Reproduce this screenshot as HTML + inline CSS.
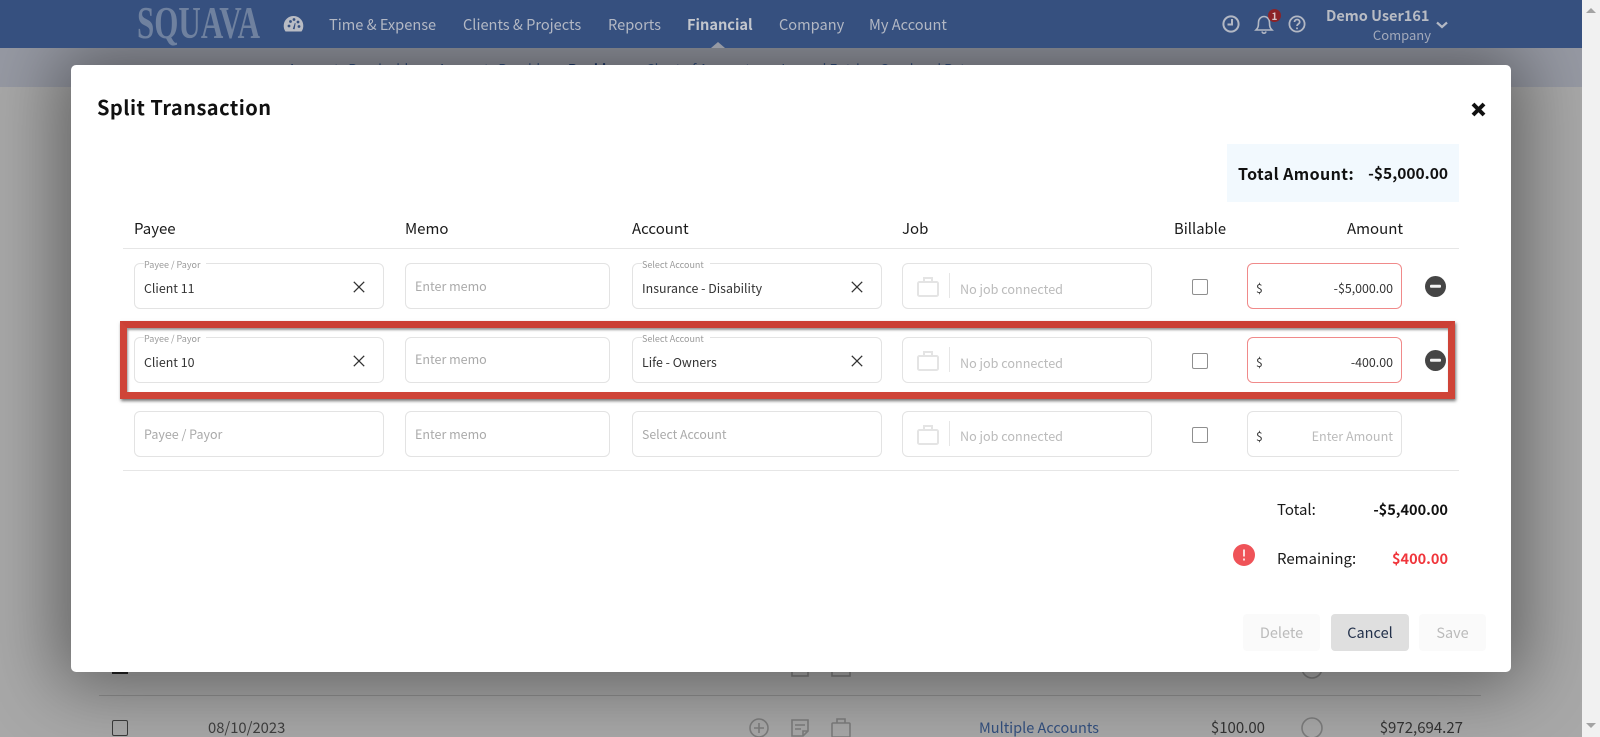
<!DOCTYPE html>
<html lang="en">
<head>
<meta charset="utf-8">
<title>Split Transaction</title>
<style>
html,body{margin:0;padding:0;width:1600px;height:737px;overflow:hidden;background:#a8a8a8}
*{box-sizing:border-box}
body{position:relative;font-family:"Noto Sans CJK JP","Liberation Sans",sans-serif;color:#111}
.a{position:absolute}
.t{position:absolute;white-space:nowrap;height:20px;line-height:20px}
.r{text-align:right}
#sub{left:0;top:48px;width:1582px;height:39px;background:#9699a3}
#hdr{left:0;top:0;width:1582px;height:48px;background:#36507f;z-index:5;color:#b3b8c4;font-size:14.600px}
#sb{left:1582px;top:0;width:18px;height:737px;background:#f1f1f1;z-index:6}
#modal{left:71px;top:65px;width:1440px;height:607px;background:#fff;border-radius:5px;box-shadow:0 0 70px 14px rgba(0,0,0,.42);z-index:3}
#page{left:0;top:0;width:1600px;height:737px;z-index:4;pointer-events:none}
.f{position:absolute;border:1px solid #e3e3e3;border-radius:6px;background:#fff;height:46px}
.lab{position:absolute;font-size:9px;color:#9a9a9a;background:#fff;padding:0 6px 0 0;height:10px;line-height:10px;white-space:nowrap}
.v{font-size:12.400px;color:#333}
.p{font-size:12.500px;color:#aaa}
.n{font-size:12.600px;color:#bbb}
.h{font-size:15px;color:#1a1a1a}
.b{font-size:14.500px;color:#111;font-weight:700}
.btn{position:absolute;top:614px;height:37px;border-radius:4px;background:#fafafa;color:#bbb;font-size:14.500px;text-align:center;line-height:37px}
.cb{position:absolute;width:16px;height:16px;border:1.5px solid #8f8f8f;border-radius:2px;background:#fff}
.sep{position:absolute;width:1px;height:25px;background:#e6e6e6}
.line{position:absolute;height:1px;background:#e6e6e6;left:123px;width:1336px}
svg{position:absolute;overflow:visible}
</style>
</head>
<body>

<div class="a" id="sub"></div>
<div class="t" style="left:288px;top:58px;font-size:13.500px;color:#33507f;z-index:1">Accounts Receivable</div>
<div class="t" style="left:438px;top:58px;font-size:13.500px;color:#33507f;z-index:1">Accounts Payable</div>
<div class="t" style="left:568px;top:58px;font-size:13.500px;color:#1f3a6b;font-weight:700;z-index:1">Banking</div>
<div class="t" style="left:646px;top:58px;font-size:13.500px;color:#33507f;z-index:1">Chart of Accounts</div>
<div class="t" style="left:778px;top:58px;font-size:13.500px;color:#33507f;z-index:1">Journal Entries</div>
<div class="t" style="left:880px;top:58px;font-size:13.500px;color:#33507f;z-index:1">Overhead Rates</div>

<!-- page rows behind the dialog -->
<div class="a" style="left:99px;top:695px;width:1382px;height:1px;background:#8f8f8f;z-index:1"></div>
<div class="a" style="left:112px;top:662px;width:16px;height:12px;border:2px solid #222;z-index:1"></div>
<div class="a" style="left:112px;top:720px;width:16px;height:16px;border:1.5px solid #3b3b3b;border-radius:2px;z-index:1"></div>
<div class="t" style="left:208px;top:718px;font-size:14.800px;color:#3f3f3f;z-index:1">08/10/2023</div>
<div class="t" style="left:979px;top:718px;font-size:14.500px;color:#33507f;z-index:1">Multiple Accounts</div>
<div class="t r" style="left:1165px;width:100px;top:718px;font-size:15px;color:#333;z-index:1">$100.00</div>
<div class="t r" style="left:1343px;width:120px;top:718px;font-size:15px;color:#333;z-index:1">$972,694.27</div>
<svg style="left:0;top:0;z-index:1" width="1600" height="737" fill="none" stroke="#7d7d7d" stroke-width="1.6">
  <circle cx="759" cy="728" r="9"/><path d="M759 723v10M754 728h10"/>
  <path d="M792 720h16v11l-5 5h-11zM795 725h10M795 729h6M808 731h-5v5"/>
  <rect x="832" y="723" width="18" height="14" rx="1"/><path d="M837 723v-4h8v4"/>
  <circle cx="1312" cy="728" r="10"/><circle cx="1312" cy="668" r="10"/>
  <rect x="792" y="660" width="16" height="16"/><rect x="832" y="662" width="18" height="14"/>
</svg>

<!-- header -->
<div class="a" id="hdr">
  <div class="t" style="left:137px;top:7px;height:32px;line-height:32px;font-family:'Liberation Serif',serif;font-size:46px;font-weight:700;color:#6f819f;transform-origin:0 50%;transform:scaleX(.675)">SQUAVA</div>
  <svg style="left:283px;top:15px" width="21" height="20" viewBox="0 0 21 20">
    <path d="M2.500 16.500A9.800 9.800 0 1 1 18.500 16.500Z" fill="#b9bcc4"/>
    <g fill="#36507f"><circle cx="6" cy="11" r="1.400"/><circle cx="7.500" cy="6.500" r="1.400"/><circle cx="11" cy="4.500" r="1.400"/><circle cx="15" cy="7" r="1.400"/><circle cx="16" cy="11.500" r="1.400"/><path d="M9.800 14l2-6 .8.300-1 6z"/></g>
  </svg>
  <div class="t" style="left:329px;top:15px">Time &amp; Expense</div>
  <div class="t" style="left:463px;top:15px">Clients &amp; Projects</div>
  <div class="t" style="left:608px;top:15px">Reports</div>
  <div class="t" style="left:687px;top:15px;font-weight:700;color:#c3c6cd">Financial</div>
  <div class="t" style="left:779px;top:15px">Company</div>
  <div class="t" style="left:869px;top:15px">My Account</div>
  <svg style="left:711px;top:42px" width="14" height="6"><path d="M0 6L7 0l7 6z" fill="#9699a3"/></svg>
  <svg style="left:1222px;top:15px" width="18" height="18" fill="none" stroke="#b3b8c4" stroke-width="2"><circle cx="9" cy="9" r="7.600"/><path d="M10 4v5.500H5.500"/></svg>
  <svg style="left:1254px;top:13px" width="20" height="22" fill="none" stroke="#b3b8c4" stroke-width="1.600"><path d="M2 17c2-2 2.500-3.500 2.500-7.500C4.500 6 7 3.500 10 3.500s5.500 2.500 5.500 6c0 4 .5 5.500 2.500 7.500z"/><path d="M8 18.500c.5 2.300 3.500 2.300 4 0"/></svg>
  <div class="a" style="left:1268px;top:9px;width:13px;height:13px;border-radius:50%;background:#8b2328;color:#d9c4c6;font-size:10px;line-height:13px;text-align:center;font-weight:700">1</div>
  <svg style="left:1288px;top:15px" width="18" height="18" fill="none" stroke="#b3b8c4" stroke-width="1.800"><circle cx="9" cy="9" r="7.600"/><path d="M6.500 7c0-3.300 5.200-3.300 5.200 0 0 2-2.700 2-2.700 4"/><path d="M9 12.500v1.700"/></svg>
  <div class="t" style="left:1326px;top:6px;font-size:14.500px;font-weight:700;color:#b9bcc4">Demo User161</div>
  <div class="t r" style="left:1331px;width:100px;top:25px;font-size:13px;color:#a3aabb">Company</div>
  <svg style="left:1436px;top:21px" width="12" height="8" fill="none" stroke="#b3b8c4" stroke-width="2.200"><path d="M1 1.500l5 4.500 5-4.500"/></svg>
</div>

<!-- scrollbar -->
<div class="a" id="sb">
  <svg style="left:4px;top:8px" width="10" height="6"><path d="M0 5L5 0l5 5z" fill="#a3a3a3"/></svg>
  <svg style="left:4px;top:723px" width="10" height="6"><path d="M0 0L5 5l5-5z" fill="#a3a3a3"/></svg>
</div>

<div class="a" id="modal"></div>

<div class="a" id="page">
  <div class="t" style="left:97px;top:95px;height:24px;line-height:24px;font-size:20px;font-weight:700;color:#111;letter-spacing:.45px">Split Transaction</div>
  <svg style="left:1471px;top:102px" width="15" height="15"><path d="M2 2l11 11M13 2L2 13" stroke="#111" stroke-width="4"/></svg>

  <div class="a" style="left:1227px;top:144px;width:232px;height:58px;background:#f2f9fe"></div>
  <div class="t b" style="left:1238px;top:163px;font-size:16px;letter-spacing:.4px">Total Amount:</div>
  <div class="t b r" style="left:1328px;width:120px;top:163px;font-size:15.500px">-$5,000.00</div>

  <div class="t h" style="left:134px;top:219px">Payee</div>
  <div class="t h" style="left:405px;top:219px">Memo</div>
  <div class="t h" style="left:632px;top:219px">Account</div>
  <div class="t h" style="left:902px;top:219px">Job</div>
  <div class="t h" style="left:1174px;top:219px;font-size:14.800px">Billable</div>
  <div class="t h r" style="left:1303px;width:100px;top:219px">Amount</div>
  <div class="line" style="top:248px"></div>
  <div class="line" style="top:470px"></div>

  <!-- row 1 -->
  <div class="f" style="left:134px;top:263px;width:250px"></div>
  <div class="lab" style="left:144px;top:260px">Payee / Payor</div>
  <div class="t v" style="left:144px;top:278px">Client 11</div>
  <svg style="left:353px;top:281px" width="12" height="12"><path d="M.8.800l10.400 10.400M11.200.800L.8 11.200" stroke="#333" stroke-width="1.300"/></svg>
  <div class="f" style="left:405px;top:263px;width:205px"></div>
  <div class="t p" style="left:415px;top:276px">Enter memo</div>
  <div class="f" style="left:632px;top:263px;width:250px"></div>
  <div class="lab" style="left:642px;top:260px">Select Account</div>
  <div class="t v" style="left:642px;top:278px">Insurance - Disability</div>
  <svg style="left:851px;top:281px" width="12" height="12"><path d="M.8.800l10.400 10.400M11.200.800L.8 11.200" stroke="#333" stroke-width="1.300"/></svg>
  <div class="f" style="left:902px;top:263px;width:250px"></div>
  <svg style="left:917px;top:276px" width="22" height="21" fill="none" stroke="#e4e4e4" stroke-width="2"><rect x="1" y="6" width="20" height="14" rx="1.500"/><path d="M7 6V2h8v4"/></svg>
  <div class="sep" style="left:949px;top:273px"></div>
  <div class="t n" style="left:960px;top:279px">No job connected</div>
  <div class="cb" style="left:1192px;top:279px"></div>
  <div class="f" style="left:1247px;top:263px;width:155px;border-color:#f08a8a"></div>
  <div class="t v" style="left:1256px;top:279px;font-size:12px">$</div>
  <div class="t v r" style="left:1293px;width:100px;top:278px">-$5,000.00</div>
  <svg style="left:1425px;top:276px" width="21" height="21"><circle cx="10.500" cy="10.500" r="10.500" fill="#454545"/><rect x="5" y="8.800" width="11" height="3" rx="1" fill="#f2f2f2"/></svg>

  <!-- row 2 -->
  <div class="f" style="left:134px;top:337px;width:250px"></div>
  <div class="lab" style="left:144px;top:334px">Payee / Payor</div>
  <div class="t v" style="left:144px;top:352px">Client 10</div>
  <svg style="left:353px;top:355px" width="12" height="12"><path d="M.8.800l10.400 10.400M11.200.800L.8 11.200" stroke="#333" stroke-width="1.300"/></svg>
  <div class="f" style="left:405px;top:337px;width:205px"></div>
  <div class="t p" style="left:415px;top:349px">Enter memo</div>
  <div class="f" style="left:632px;top:337px;width:250px"></div>
  <div class="lab" style="left:642px;top:334px">Select Account</div>
  <div class="t v" style="left:642px;top:352px">Life - Owners</div>
  <svg style="left:851px;top:355px" width="12" height="12"><path d="M.8.800l10.400 10.400M11.200.800L.8 11.200" stroke="#333" stroke-width="1.300"/></svg>
  <div class="f" style="left:902px;top:337px;width:250px"></div>
  <svg style="left:917px;top:350px" width="22" height="21" fill="none" stroke="#e4e4e4" stroke-width="2"><rect x="1" y="6" width="20" height="14" rx="1.500"/><path d="M7 6V2h8v4"/></svg>
  <div class="sep" style="left:949px;top:347px"></div>
  <div class="t n" style="left:960px;top:353px">No job connected</div>
  <div class="cb" style="left:1192px;top:353px"></div>
  <div class="f" style="left:1247px;top:337px;width:155px;border-color:#f08a8a"></div>
  <div class="t v" style="left:1256px;top:353px;font-size:12px">$</div>
  <div class="t v r" style="left:1293px;width:100px;top:352px">-400.00</div>
  <svg style="left:1425px;top:350px" width="21" height="21"><circle cx="10.500" cy="10.500" r="10.500" fill="#454545"/><rect x="5" y="8.800" width="11" height="3" rx="1" fill="#f2f2f2"/></svg>

  <!-- row 3 -->
  <div class="f" style="left:134px;top:411px;width:250px"></div>
  <div class="t p" style="left:144px;top:424px">Payee / Payor</div>
  <div class="f" style="left:405px;top:411px;width:205px"></div>
  <div class="t p" style="left:415px;top:424px">Enter memo</div>
  <div class="f" style="left:632px;top:411px;width:250px"></div>
  <div class="t p" style="left:642px;top:424px;font-size:12.300px">Select Account</div>
  <div class="f" style="left:902px;top:411px;width:250px"></div>
  <svg style="left:917px;top:424px" width="22" height="21" fill="none" stroke="#e4e4e4" stroke-width="2"><rect x="1" y="6" width="20" height="14" rx="1.500"/><path d="M7 6V2h8v4"/></svg>
  <div class="sep" style="left:949px;top:421px"></div>
  <div class="t n" style="left:960px;top:426px">No job connected</div>
  <div class="cb" style="left:1192px;top:427px"></div>
  <div class="f" style="left:1247px;top:411px;width:155px"></div>
  <div class="t v" style="left:1256px;top:427px;font-size:12px">$</div>
  <div class="t n r" style="left:1293px;width:100px;top:426px">Enter Amount</div>

  <!-- red highlight -->
  <div class="a" style="left:120px;top:321px;width:1335px;height:78px;border:7px solid #cf4438;border-top-color:#cb4035;box-shadow:1px 2px 3px rgba(0,0,0,.55),inset 1px 2px 2px rgba(0,0,0,.4)"></div>

  <!-- totals -->
  <div class="t" style="left:1277px;top:500px;font-size:15px;color:#1a1a1a">Total:</div>
  <div class="t b r" style="left:1328px;width:120px;top:500px">-$5,400.00</div>
  <svg style="left:1233px;top:544px" width="22" height="22"><circle cx="11" cy="11" r="11" fill="#ef5358"/><path d="M11 5.500v7" stroke="#fbdcdc" stroke-width="2"/><path d="M11 14.500v2" stroke="#fbdcdc" stroke-width="2"/></svg>
  <div class="t" style="left:1277px;top:549px;font-size:15px;color:#1a1a1a">Remaining:</div>
  <div class="t b r" style="left:1328px;width:120px;top:549px;color:#f0353b">$400.00</div>

  <div class="btn" style="left:1243px;width:77px">Delete</div>
  <div class="btn" style="left:1331px;width:78px;background:#dfdfdf;color:#22304a">Cancel</div>
  <div class="btn" style="left:1419px;width:67px">Save</div>
</div>

</body>
</html>
